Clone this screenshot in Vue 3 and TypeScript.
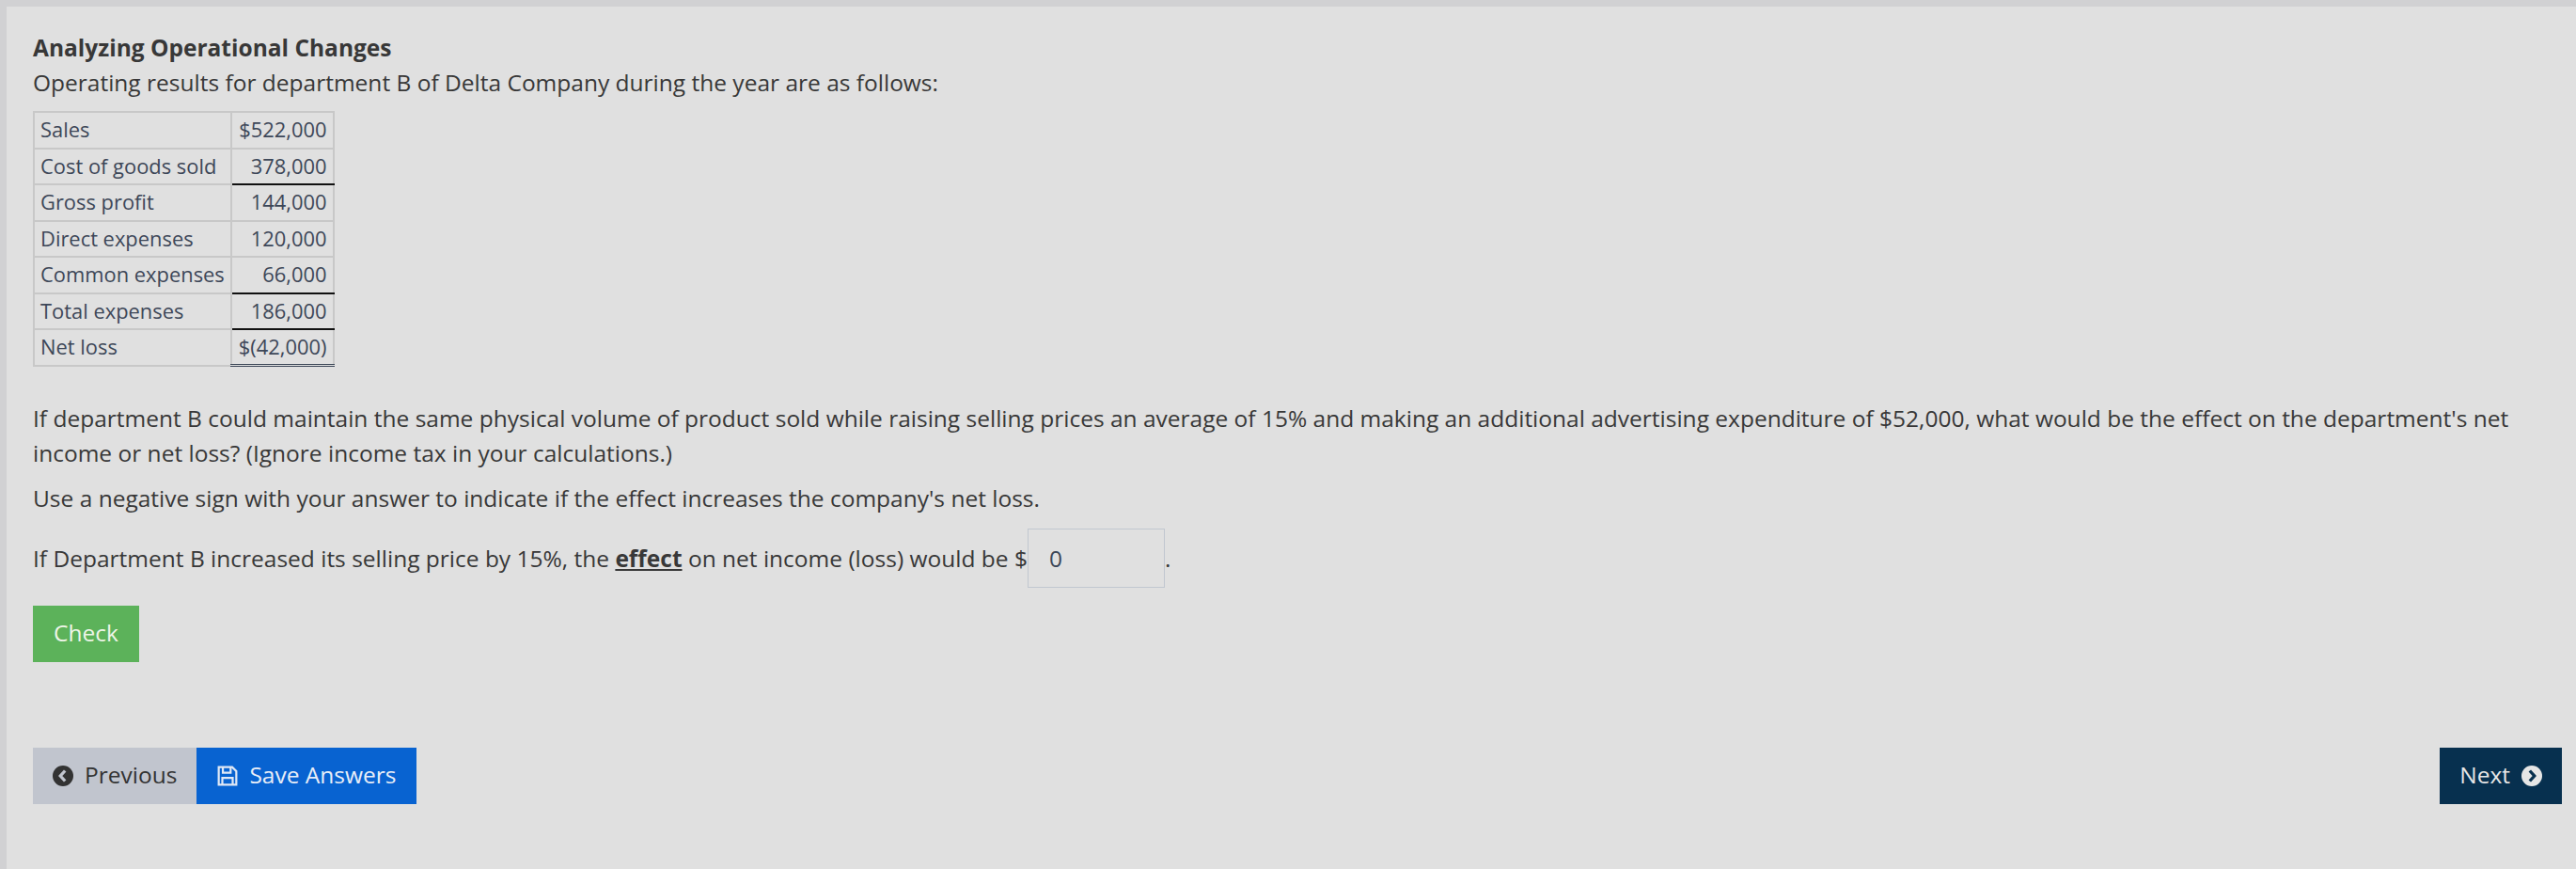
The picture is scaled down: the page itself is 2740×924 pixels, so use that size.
<template>
  <div class="page">
    <div class="panel">
      <div class="title">Analyzing Operational Changes</div>
      <div class="intro">Operating results for department B of Delta Company during the year are as follows:</div>

      <table class="results">
        <tbody>
          <tr v-for="row in rows" :key="row.label">
            <td class="name">{{ row.label }}</td>
            <td class="amount" :class="row.line">{{ row.value }}</td>
          </tr>
        </tbody>
      </table>

      <p class="question">
        If department B could maintain the same physical volume of product sold while raising selling prices an average of 15% and making an additional advertising expenditure of $52,000, what would be the effect on the department's net income or net loss? (Ignore income tax in your calculations.)
      </p>
      <p class="hint">Use a negative sign with your answer to indicate if the effect increases the company's net loss.</p>
      <p class="answer">
        If Department B increased its selling price by 15%, the <b class="effect">effect</b> on net income (loss) would be $<input class="field" :value="answer" />.
      </p>

      <button class="btn check">Check</button>

      <div class="nav">
        <div class="nav-left">
          <button class="btn prev">
            <svg class="ico" viewBox="0 0 20 20">
              <circle cx="10" cy="10" r="10" fill="#333" />
              <path d="M12 5 L7.5 10 L12 15" fill="none" stroke="#c1c5ce" stroke-width="3" />
            </svg>
            Previous
          </button>
          <button class="btn save">
            <svg class="ico" viewBox="0 0 20 20" fill="none" stroke="#e0e8f5" stroke-width="2">
              <path d="M1.5 1.5 H14.5 L18.5 5.5 V18.5 H1.5 Z" />
              <path d="M5.5 1.5 V7 H13 V1.5" />
              <path d="M5 18.5 V12 H15 V18.5" />
            </svg>
            Save Answers
          </button>
        </div>
        <button class="btn next">
          Next
          <svg class="ico" viewBox="0 0 20 20">
            <circle cx="10" cy="10" r="10" fill="#e6e6e6" />
            <path d="M8 5 L12.5 10 L8 15" fill="none" stroke="#07304f" stroke-width="3" />
          </svg>
        </button>
      </div>
    </div>
  </div>
</template>

<script setup lang="ts">
import { ref } from 'vue'

interface Row {
  label: string
  value: string
  line?: string
}

const rows: Row[] = [
  { label: 'Sales', value: '$522,000' },
  { label: 'Cost of goods sold', value: '378,000', line: 'single' },
  { label: 'Gross profit', value: '144,000' },
  { label: 'Direct expenses', value: '120,000' },
  { label: 'Common expenses', value: '66,000', line: 'single' },
  { label: 'Total expenses', value: '186,000', line: 'single' },
  { label: 'Net loss', value: '$(42,000)', line: 'double' },
]

const answer = ref('0')
</script>

<style>
html,
body {
  margin: 0;
  background: #e0e0e0;
}
</style>

<style scoped>
.page {
  width: 2740px;
  height: 924px;
  box-sizing: border-box;
  background: #d1d1d3;
  padding: 7px 0 0 7px;
  font-family: "Open Sans", "Noto Sans", sans-serif;
  font-size: 24.5px;
  line-height: 37px;
  color: #383838;
}

.panel {
  height: 917px;
  box-sizing: border-box;
  background: #e0e0e0;
  padding: 25px 15px 0 28px;
}

.title {
  font-weight: 700;
}

.results {
  border-collapse: collapse;
  margin: 12px 0 0;
  font-size: 21.9px;
  line-height: 30px;
  color: #3d4758;
}

.results td {
  border: 2px solid #c8c8c8;
  padding: 3px 6px;
  height: 38.5px;
  box-sizing: border-box;
  white-space: nowrap;
}

.results td.amount {
  padding: 3px 7px;
  text-align: right;
}

.amount.single {
  border-bottom: 2px solid #111 !important;
}

.amount.double {
  border-bottom: 3px double #3d4758 !important;
}

.question {
  margin: 36px 0 0;
}

.hint {
  margin: 11px 0 0;
}

.answer {
  margin: 15px 0 0;
  line-height: 62px;
  height: 62px;
}

.effect {
  text-decoration: underline;
}

.field {
  width: 146px;
  height: 63px;
  box-sizing: border-box;
  border: 1px solid #c1c7d0;
  background: transparent;
  font: inherit;
  color: #3d4758;
  padding: 0 22px;
  margin: -3px 0 3px;
  vertical-align: middle;
  outline: none;
}

.btn {
  display: inline-flex;
  align-items: center;
  gap: 12px;
  height: 60px;
  border: 0;
  border-radius: 0;
  padding: 0 22px 3px;
  font: inherit;
  white-space: nowrap;
}

.btn .ico {
  margin-top: 3px;
}

.check {
  margin-top: 19px;
  background: #5cb25a;
  color: #eef5e8;
}

.nav {
  display: flex;
  justify-content: space-between;
  margin-top: 91px;
}

.nav-left {
  display: flex;
}

.prev {
  padding: 0 21px 3px;
  background: #c1c5ce;
  color: #333;
}

.save {
  background: #0863d1;
  color: #e8eef8;
}

.next {
  padding: 0 21px 3px;
  background: #07304f;
  color: #e6e6e6;
}

.ico {
  width: 22px;
  height: 22px;
  flex: none;
}
</style>
